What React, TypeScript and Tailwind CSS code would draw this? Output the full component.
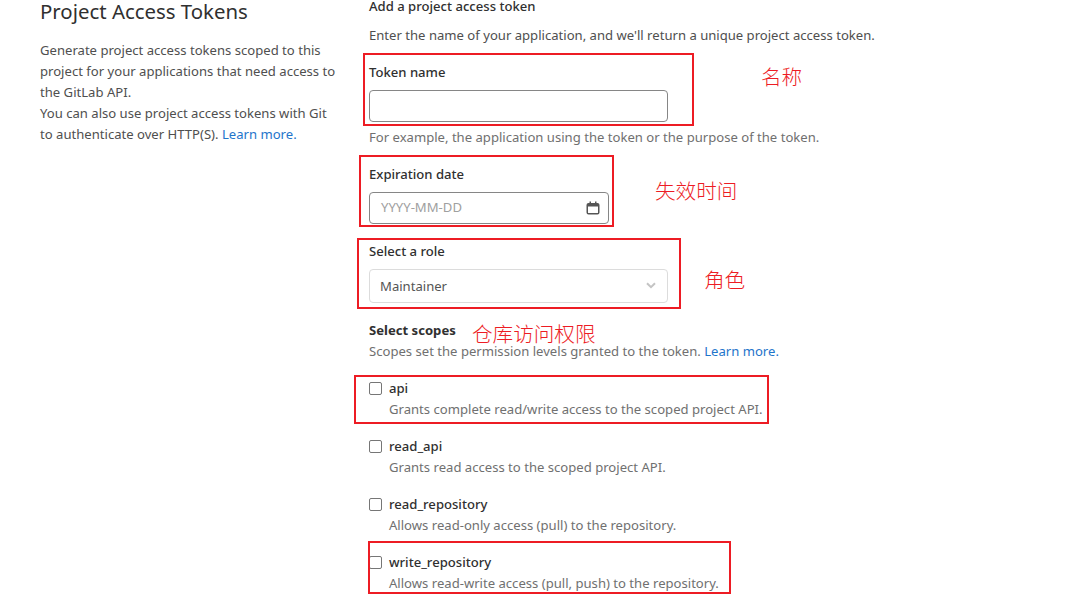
import React from 'react'

const scopes = [
  { name: 'api', text: 'Grants complete read/write access to the scoped project API.' },
  { name: 'read_api', text: 'Grants read access to the scoped project API.' },
  { name: 'read_repository', text: 'Allows read-only access (pull) to the repository.' },
  { name: 'write_repository', text: 'Allows read-write access (pull, push) to the repository.' },
]

const marks = [
  { box: 'left-[363px] top-[53px] w-[331px] h-[73px]' },
  { box: 'left-[359px] top-[155px] w-[255px] h-[72px]' },
  { box: 'left-[357px] top-[238px] w-[324px] h-[71px]' },
  { box: 'left-[354px] top-[375px] w-[415px] h-[49px]' },
  { box: 'left-[368px] top-[541px] w-[363px] h-[53px]' },
]

const notes = [
  { text: '名称', pos: 'left-[761px] top-[63px]' },
  { text: '失效时间', pos: 'left-[655px] top-[177px]' },
  { text: '角色', pos: 'left-[704px] top-[266px]' },
  { text: '仓库访问权限', pos: 'left-[472px] top-[320px]' },
]

const CalendarIcon = () => (
  <svg width="14" height="14" viewBox="0 0 14 14" className="text-[#555555]">
    <path
      fill="currentColor"
      fillRule="evenodd"
      d="M3.5 0.5h1.5v1.5h4V0.5h1.5v1.5h1a2 2 0 0 1 2 2v7.5a2 2 0 0 1-2 2h-9a2 2 0 0 1-2-2V4a2 2 0 0 1 2-2h1zM2 5.5v6a.5.5 0 0 0 .5.5h9a.5.5 0 0 0 .5-.5v-6z"
    />
  </svg>
)

const App = () => {
  return (
    <div className="relative h-[601px] w-[1085px] overflow-hidden bg-white font-['Noto_Sans',sans-serif] text-[13.1px] text-[#303030]">
      <div className="flex">
        <div className="ml-[40px] w-[300px] shrink-0">
          <h4 className="-mt-[1px] text-[20.4px] leading-[24px] font-normal text-[#303030]">Project Access Tokens</h4>
          <p className="mt-[17px] leading-[21px] text-[#4f4f4f]">
            Generate project access tokens scoped to this project for your applications that need access to the GitLab API.
            <br />
            You can also use project access tokens with Git to authenticate over HTTP(S).{' '}
            <a className="text-[#1f75cb]">Learn more.</a>
          </p>
        </div>

        <div className="ml-[29px] flex-1">
          <h5 className="leading-[13px] font-medium text-[#303030]">Add a project access token</h5>
          <p className="mt-[13px] leading-[18px] text-[#4f4f4f]">
            Enter the name of your application, and we'll return a unique project access token.
          </p>

          <label className="mt-[19px] block leading-[18px] font-medium">Token name</label>
          <div className="mt-[9px] h-[32px] w-[299px] rounded-[4px] border border-[#868686] bg-white" />
          <p className="mt-[6px] leading-[18px] text-[#707070]">For example, the application using the token or the purpose of the token.</p>

          <label className="mt-[19px] block leading-[18px] font-medium">Expiration date</label>
          <div className="mt-[9px] flex h-[32px] w-[240px] items-center justify-between rounded-[4px] border border-[#868686] pl-[11px] pr-[8px] text-[#a0a0a0]">
            <span>YYYY-MM-DD</span>
            <CalendarIcon />
          </div>

          <label className="mt-[18px] block leading-[18px] font-medium">Select a role</label>
          <div className="mt-[9px] flex h-[34px] w-[299px] items-center justify-between rounded-[4px] border border-[#dcdcdc] pl-[10px] pr-[11px] text-[#555555]">
            <span className="mt-[1px]">Maintainer</span>
            <svg width="10" height="7" viewBox="0 0 10 7" className="-mt-[2px] text-[#c4c4c4]">
              <path d="M1 1.2 5 5.2 9 1.2" fill="none" stroke="currentColor" strokeWidth="2" />
            </svg>
          </div>

          <h6 className="mt-[18px] leading-[18px] font-bold text-[#303030]">Select scopes</h6>
          <p className="mt-[3px] leading-[18px] text-[#707070]">
            Scopes set the permission levels granted to the token. <a className="text-[#1f75cb]">Learn more.</a>
          </p>

          <div className="mt-[19px] flex flex-col gap-[19px]">
            {scopes.map((scope) => (
              <div key={scope.name} className="flex">
                <span className="mt-[3px] h-[13px] w-[13px] shrink-0 rounded-[2px] border border-[#767676] bg-white" />
                <div className="ml-[7px]">
                  <div className="leading-[18px] font-medium">{scope.name}</div>
                  <div className="mt-[3px] leading-[18px] text-[#707070]">{scope.text}</div>
                </div>
              </div>
            ))}
          </div>
        </div>
      </div>

      {marks.map((mark) => (
        <div key={mark.box} className={`absolute border-2 border-[#ed1c24] ${mark.box}`} />
      ))}
      {notes.map((note) => (
        <span
          key={note.text}
          className={`absolute whitespace-nowrap font-['Noto_Sans_CJK_SC',sans-serif] text-[20.6px] leading-[26px] font-light text-[#ed1c24] ${note.pos}`}
        >
          {note.text}
        </span>
      ))}
    </div>
  )
}

export default App
